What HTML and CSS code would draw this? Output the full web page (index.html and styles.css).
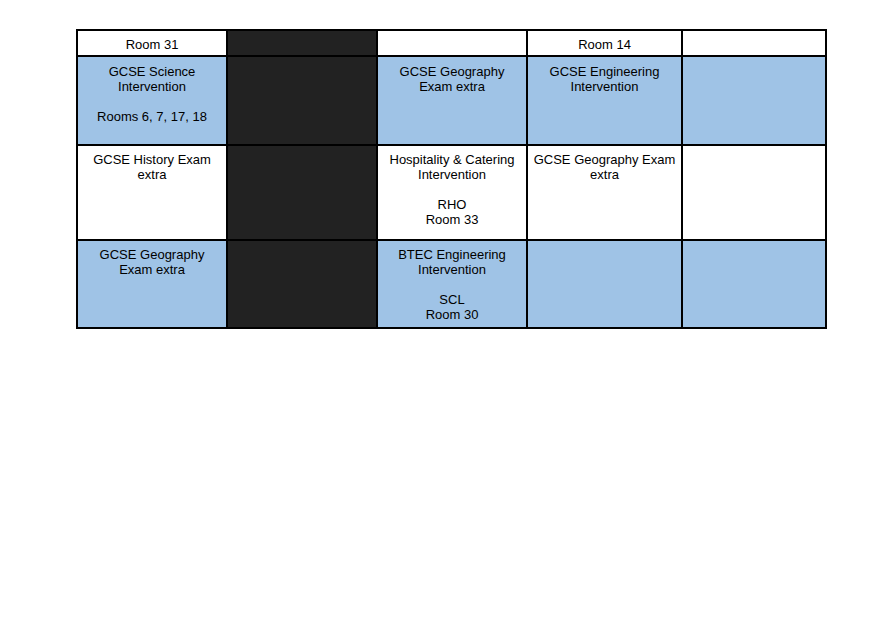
FILE: index.html
```html
<!DOCTYPE html>
<html>
<head>
<meta charset="utf-8">
<link rel="stylesheet" href="styles.css">
</head>
<body>
<table class="timetable">
  <colgroup>
    <col class="c1"><col class="c2"><col class="c3"><col class="c4"><col class="c5">
  </colgroup>
  <tr class="row-head">
    <td>Room 31</td>
    <td class="dark"></td>
    <td></td>
    <td>Room 14</td>
    <td></td>
  </tr>
  <tr class="row-a blue">
    <td>GCSE Science<br>Intervention<br><br>Rooms 6, 7, 17, 18</td>
    <td class="dark"></td>
    <td>GCSE Geography<br>Exam extra</td>
    <td>GCSE Engineering<br>Intervention</td>
    <td></td>
  </tr>
  <tr class="row-b">
    <td>GCSE History Exam<br>extra</td>
    <td class="dark"></td>
    <td>Hospitality &amp; Catering<br>Intervention<br><br>RHO<br>Room 33</td>
    <td>GCSE Geography Exam<br>extra</td>
    <td></td>
  </tr>
  <tr class="row-c blue">
    <td>GCSE Geography<br>Exam extra</td>
    <td class="dark"></td>
    <td>BTEC Engineering<br>Intervention<br><br>SCL<br>Room 30</td>
    <td></td>
    <td></td>
  </tr>
</table>
</body>
</html>
```

FILE: styles.css
```css
html, body {
  margin: 0;
  padding: 0;
  background: #ffffff;
}

body {
  font-family: "Liberation Sans", Arial, sans-serif;
  font-size: 13px;
  line-height: 15px;
  color: #000000;
}

.timetable {
  border-collapse: collapse;
  table-layout: fixed;
  margin: 29px 0 0 76px;
  width: 751px;
}

.c1, .c2, .c3 { width: 150px; }
.c4 { width: 155px; }
.c5 { width: 144px; }

.timetable td {
  border: 2px solid #000000;
  text-align: center;
  vertical-align: top;
  padding: 6px 2px 0;
  box-sizing: border-box;
}

.row-head td {
  height: 26px;
  padding-top: 6px;
}

.row-a td {
  height: 89px;
  padding-top: 7px;
}
.row-b td { height: 95px; }
.row-c td { height: 88px; }

.blue td { background: #9fc3e6; }

.timetable td.dark { background: #222222; }
```
